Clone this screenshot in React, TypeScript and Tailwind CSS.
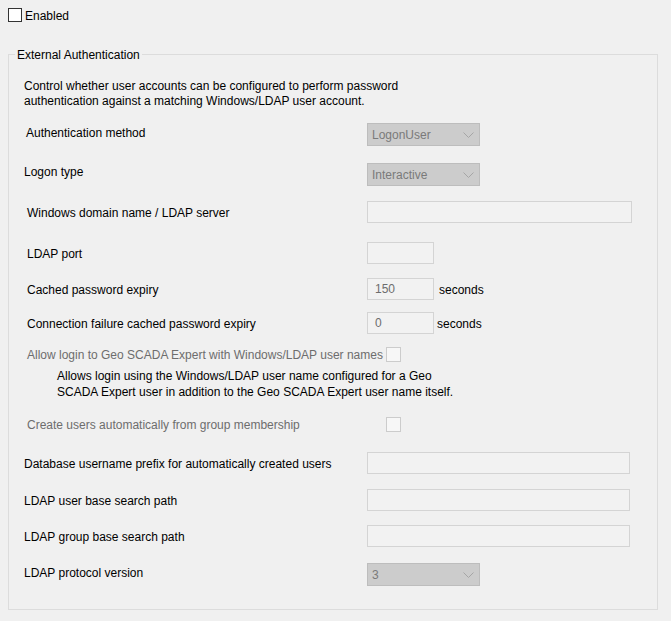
import React from "react";

const font = { fontFamily: '"Liberation Sans", Arial, sans-serif' };

const Chevron: React.FC = () => (
  <svg width="11" height="6" viewBox="0 0 11 6" className="shrink-0">
    <path d="M0.5 0.5 L5.5 5.5 L10.5 0.5" fill="none" stroke="#a6a6a6" strokeWidth="1" />
  </svg>
);

const Select: React.FC<{ value: string }> = ({ value }) => (
  <div className="flex h-[23px] w-[113px] items-center justify-between border border-[#bdbdbd] bg-[#cccccc] pl-[4px] pr-[5px] pt-[1px] text-[#7a7a7a]">
    <span>{value}</span>
    <Chevron />
  </div>
);

const Field: React.FC<{ w: string; value?: string }> = ({ w, value }) => (
  <div className={`flex h-[22px] items-center border border-[#d4d4d4] bg-[#f2f2f2] px-[7px] pt-[1px] text-[#6d6d6d] ${w}`}>
    {value}
  </div>
);

const Box: React.FC = () => (
  <div className="h-[15px] w-[15px] border border-[#cccccc] bg-[#f7f7f7]" />
);

const App: React.FC = () => {
  return (
    <div
      className="h-[621px] w-[671px] overflow-hidden bg-[#f0f0f0] pl-[8px] pt-[8px] text-[12px] leading-[15px] text-black"
      style={font}
    >
      <label className="flex h-[14px] items-center gap-[3px]">
        <span className="h-[14px] w-[14px] border border-[#333333] bg-white" />
        <span className="pt-[2px]">Enabled</span>
      </label>

      <fieldset className="mt-[23px] h-[565px] w-[650px] border border-[#dcdcdc] pb-0">
        <legend className="ml-[6px] px-[2px] pt-[2px] leading-[16px]">External Authentication</legend>

        <div className="flex flex-col pl-[15px]">
          <p className="mt-[16px]">
            Control whether user accounts can be configured to perform password
            <br />
            authentication against a matching Windows/LDAP user account.
          </p>

          {/* dropdowns */}
          <div className="mt-[14px] flex items-start">
            <span className="w-[343px] shrink-0 pl-[2px] pt-[3px]">Authentication method</span>
            <Select value="LogonUser" />
          </div>
          <div className="mt-[17px] flex items-start">
            <span className="w-[343px] shrink-0 pt-[2px]">Logon type</span>
            <Select value="Interactive" />
          </div>

          {/* server settings */}
          <div className="mt-[15px] flex items-center">
            <span className="w-[343px] shrink-0 pl-[3px] pt-[2px]">Windows domain name / LDAP server</span>
            <Field w="w-[265px]" />
          </div>
          <div className="mt-[19px] flex items-center">
            <span className="w-[343px] shrink-0 pl-[3px] pt-[2px]">LDAP port</span>
            <Field w="w-[67px]" />
          </div>
          <div className="mt-[14px] flex items-center">
            <span className="w-[343px] shrink-0 pl-[3px] pt-[2px]">Cached password expiry</span>
            <Field w="w-[67px]" value="150" />
            <span className="ml-[5px] pt-[2px]">seconds</span>
          </div>
          <div className="mt-[12px] flex items-center">
            <span className="w-[343px] shrink-0 pl-[3px] pt-[2px]">Connection failure cached password expiry</span>
            <Field w="w-[67px]" value="0" />
            <span className="ml-[3px] pt-[2px]">seconds</span>
          </div>

          {/* user name options */}
          <div className="mt-[13px] flex h-[15px] items-center">
            <span className="w-[362px] shrink-0 pl-[3px] pt-[2px] text-[#6d6d6d]">
              Allow login to Geo SCADA Expert with Windows/LDAP user names
            </span>
            <Box />
          </div>
          <p className="mt-[6px] pl-[33px] leading-[16px]">
            Allows login using the Windows/LDAP user name configured for a Geo
            <br />
            SCADA Expert user in addition to the Geo SCADA Expert user name itself.
          </p>
          <div className="mt-[17px] flex h-[15px] items-center">
            <span className="w-[362px] shrink-0 pl-[3px] pt-[2px] text-[#6d6d6d]">
              Create users automatically from group membership
            </span>
            <Box />
          </div>

          {/* auto created users */}
          <div className="mt-[20px] flex items-center">
            <span className="w-[343px] shrink-0 pt-[2px]">Database username prefix for automatically created users</span>
            <Field w="w-[263px]" />
          </div>
          <div className="mt-[15px] flex items-center">
            <span className="w-[343px] shrink-0 pt-[2px]">LDAP user base search path</span>
            <Field w="w-[263px]" />
          </div>
          <div className="mt-[14px] flex items-center">
            <span className="w-[343px] shrink-0 pt-[2px]">LDAP group base search path</span>
            <Field w="w-[263px]" />
          </div>
          <div className="mt-[16px] flex items-start">
            <span className="w-[343px] shrink-0 pt-[3px]">LDAP protocol version</span>
            <Select value="3" />
          </div>
        </div>
      </fieldset>
    </div>
  );
};

export default App;
